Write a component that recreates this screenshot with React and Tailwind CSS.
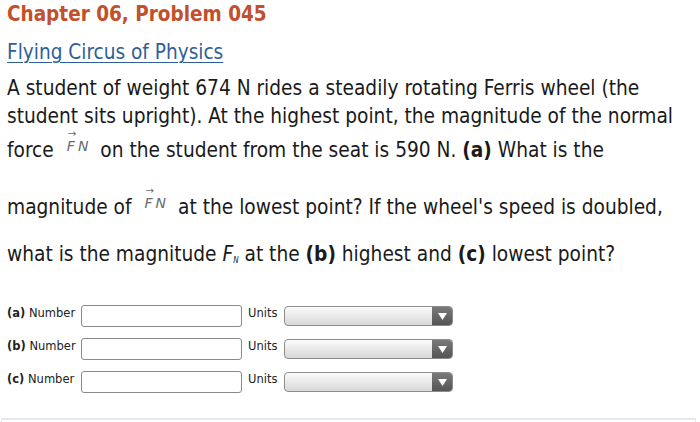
export default function App() {
  const FN = () => (
    <span className="relative inline-block ml-[13px] mr-[12px] text-[14px] italic text-[#6b6b6b] align-[6px] leading-none" style={{ fontFamily: '"DejaVu Sans", sans-serif' }}>
      <span className="absolute left-[1px] -top-[10px] text-[10px] not-italic">→</span>
      F<span className="ml-[3px]">N</span>
    </span>
  )

  const rows = ['a', 'b', 'c']

  return (
    <div className="w-[700px] h-[422px] bg-white overflow-hidden relative text-[#222]" style={{ fontFamily: '"DejaVu Sans Condensed", "DejaVu Sans", sans-serif' }}>
      <div className="px-[7px] pt-[2px]">
        <h1 className="text-[20.5px] font-bold text-[#c1502b] leading-[24px]">
          Chapter 06, Problem 045
        </h1>
        <a className="block mt-[15px] text-[20.6px] leading-[22px] text-[#2f5f96] underline underline-offset-[3px] decoration-[1px]">
          Flying Circus of Physics
        </a>
        <div className="mt-[12px] text-[20.7px] text-[#1a1a1a]">
          <div className="leading-[27px]">A student of weight 674 N rides a steadily rotating Ferris wheel (the</div>
          <div className="leading-[27px] mt-[1px]">student sits upright). At the highest point, the magnitude of the normal</div>
          <div className="leading-[27px] mt-[7px]">force<FN />on the student from the seat is 590 N. <b>(a)</b> What is the</div>
          <div className="leading-[27px] mt-[30px]">magnitude of<FN />at the lowest point? If the wheel's speed is doubled,</div>
          <div className="leading-[27px] mt-[20px]">
            what is the magnitude <span className="italic">F<sub className="text-[8px]">N</sub></span> at the <b>(b)</b> highest and <b>(c)</b> lowest point?
          </div>
        </div>
      </div>

      <div className="mt-[37px] pl-[7px] flex flex-col gap-[12px]" style={{ fontFamily: '"DejaVu Sans", sans-serif' }}>
        {rows.map((r) => (
          <div key={r} className="flex items-start h-[21px]">
            <div className="w-[74px] pt-[1px] text-[11.5px] leading-[14px] text-[#222]">
              <b>({r})</b> Number
            </div>
            <div className="w-[161px] h-[22px] border border-[#8a8a8a] rounded-[3px] bg-white" />
            <div className="ml-[6px] w-[36px] pt-[1px] text-[11.5px] leading-[14px] text-[#222]">Units</div>
            <div className="w-[169px] h-[20px] mt-[1px] border border-[#8c8c8c] rounded-[4px] flex overflow-hidden bg-gradient-to-b from-[#fbfbfb] to-[#d8d8d8]">
              <div className="flex-1" />
              <div className="w-[20px] bg-gradient-to-b from-[#7a7a7a] to-[#555] flex items-center justify-center">
                <svg width="9" height="7" viewBox="0 0 9 7"><path d="M0 0 H9 L4.5 7 Z" fill="#fff" /></svg>
              </div>
            </div>
          </div>
        ))}
      </div>

      <div className="absolute left-[1px] right-[4px] top-[418px] h-[6px] border-t-2 border-x border-[#e3e7ef]" />
    </div>
  )
}
